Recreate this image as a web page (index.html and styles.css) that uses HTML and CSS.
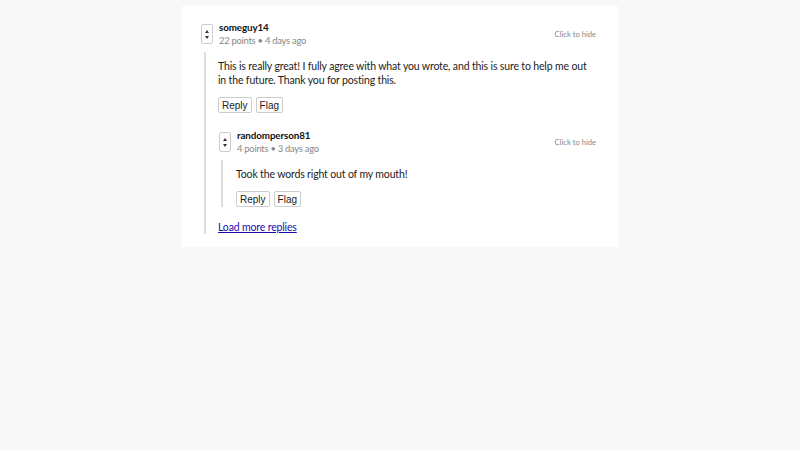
FILE: index.html
```html
<!DOCTYPE html>
<html>
<head>
<meta charset="utf-8">
<link rel="stylesheet" href="styles.css">
</head>
<body>
<div class="card">
  <div class="comment">
    <div class="head">
      <div class="vote">
        <svg class="arrow" viewBox="0 0 4 3"><path d="M2 0L4 3H0Z"/></svg>
        <svg class="arrow" viewBox="0 0 4 3"><path d="M0 0H4L2 3Z"/></svg>
      </div>
      <div class="who">
        <div class="name">someguy14</div>
        <div class="meta">22 points • 4 days ago</div>
      </div>
      <div class="hide">Click to hide</div>
    </div>
    <div class="thread">
      <p class="text">This is really great! I fully agree with what you wrote, and this is sure to help me out in the future. Thank you for posting this.</p>
      <div class="actions"><button class="btn">Reply</button><button class="btn">Flag</button></div>
      <div class="comment nested">
        <div class="head">
          <div class="vote">
            <svg class="arrow" viewBox="0 0 4 3"><path d="M2 0L4 3H0Z"/></svg>
            <svg class="arrow" viewBox="0 0 4 3"><path d="M0 0H4L2 3Z"/></svg>
          </div>
          <div class="who">
            <div class="name">randomperson81</div>
            <div class="meta">4 points • 3 days ago</div>
          </div>
          <div class="hide">Click to hide</div>
        </div>
        <div class="thread inner">
          <p class="text">Took the words right out of my mouth!</p>
          <div class="actions"><button class="btn">Reply</button><button class="btn">Flag</button></div>
        </div>
      </div>
      <a class="more" href="#">Load more replies</a>
    </div>
  </div>
</div>
</body>
</html>
```
FILE: styles.css
```css
html, body { margin: 0; padding: 0; }
body {
  background: #f8f8f8;
  font-family: "Lato", "Noto Sans", sans-serif;
  color: #222;
}
.card {
  width: 436px;
  box-sizing: border-box;
  margin: 6px 0 0 182px;
  background: #fff;
  padding: 15px 22px 13px 19px;
}
.head {
  display: flex;
  align-items: flex-start;
}
.vote {
  width: 10px;
  height: 18px;
  margin-top: 3px;
  border: 1px solid #ccc;
  border-radius: 2px;
  display: flex;
  flex-direction: column;
  align-items: center;
  justify-content: center;
  gap: 3px;
}
.arrow {
  width: 4px;
  height: 3px;
  display: block;
  fill: #333;
}
.who { margin-left: 6px; }
.name {
  font-size: 9.8px;
  font-weight: bold;
  line-height: 13px;
  letter-spacing: -0.1px;
  color: #111;
}
.meta {
  font-size: 9.4px;
  line-height: 13px;
  letter-spacing: -0.25px;
  color: #888;
}
.hide {
  margin-left: auto;
  margin-top: 8px;
  font-size: 7.6px;
  line-height: 10px;
  color: #888;
}
.thread {
  margin: 5px 0 0 3px;
  border-left: 2px solid #ddd;
  padding: 1px 0 0 12px;
}
.text {
  margin: 6px 0 0;
  font-size: 10.5px;
  letter-spacing: -0.15px;
  line-height: 14px;
  color: #222;
}
.actions {
  display: flex;
  gap: 4px;
  margin-top: 10px;
}
.btn {
  font-family: "Liberation Sans", Arial, sans-serif;
  font-size: 10px;
  height: 16px;
  padding: 0 3px;
  background: #fff;
  border: 1px solid #ccc;
  border-radius: 2px;
  color: #222;
}
.nested { margin-top: 16px; margin-left: 1px; }
.inner { margin-left: 2px; padding-left: 13px; }
.more {
  display: inline-block;
  margin-top: 13px;
  font-size: 10.5px;
  letter-spacing: -0.15px;
  line-height: 14px;
  color: #1a0dab;
}
```
